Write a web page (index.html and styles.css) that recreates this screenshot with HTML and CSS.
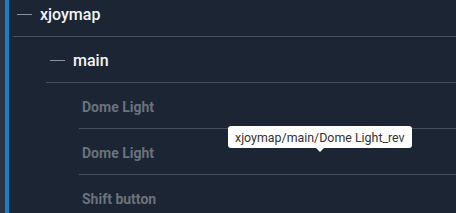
FILE: index.html
```html
<!DOCTYPE html>
<html lang="en">
<head>
    <meta charset="UTF-8">
    <title>xjoymap</title>
    <link rel="stylesheet" href="styles.css">
</head>
<body>
<div class="page">
    <div class="rail"></div>
    <div class="accent"></div>
    <div class="tree">
        <div class="node">
            <div class="row top"><span class="dash"></span><span class="name">xjoymap</span></div>
            <div class="children">
                <div class="node">
                    <div class="row"><span class="dash"></span><span class="name">main</span></div>
                    <div class="children">
                        <div class="row leaf"><span class="label">Dome Light</span></div>
                        <div class="row leaf">
                            <span class="label">Dome Light</span>
                            <div class="tip">xjoymap/main/Dome Light_rev</div>
                        </div>
                        <div class="row leaf"><span class="label">Shift button</span></div>
                    </div>
                </div>
            </div>
        </div>
    </div>
</div>
</body>
</html>
```

FILE: styles.css
```css
*{
    margin: 0;
    padding: 0;
    box-sizing: border-box;
}
body{
    background: #1b2533;
    font-family: Roboto, "Liberation Sans", sans-serif;
    overflow: hidden;
    height: 213px;
}
.page{
    display: flex;
    height: 213px;
}
.rail{
    width: 5px;
    background: #2a3443;
}
.accent{
    width: 4px;
    background: #1b7dc4;
}
.tree{
    flex: 1;
    padding-left: 4px;
    margin-top: -9px;
}
.children{
    padding-left: 33px;
}
.row{
    position: relative;
    height: 46px;
    display: flex;
    align-items: center;
    border-bottom: 1px solid #48505b;
    padding-left: 4px;
    padding-top: 2px;
}
.dash{
    width: 15px;
    height: 1px;
    background: #8b929b;
    margin-right: 8px;
}
.name{
    color: #f2f4f6;
    font-size: 16px;
    font-weight: 500;
}
.leaf{
    padding-left: 3px;
}
.label{
    color: #6b727c;
    font-size: 14px;
    font-weight: 700;
}
.tip{
    position: absolute;
    left: 149px;
    top: -3px;
    height: 22px;
    display: flex;
    align-items: center;
    background: #fff;
    color: #333;
    font-size: 12.4px;
    padding: 0 7px;
    border-radius: 3px;
    white-space: nowrap;
}
.tip::after{
    content: "";
    position: absolute;
    left: 88px;
    bottom: -4px;
    border-left: 4px solid transparent;
    border-right: 4px solid transparent;
    border-top: 4px solid #fff;
}
```
